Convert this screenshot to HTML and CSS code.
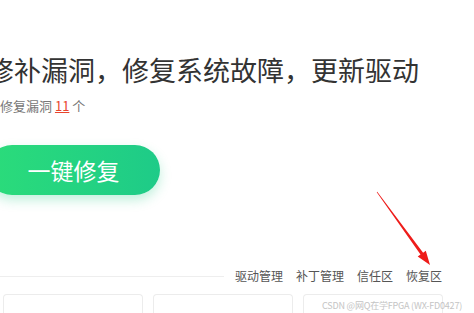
FILE: index.html
```html
<!DOCTYPE html>
<html lang="zh-CN">
<head>
<meta charset="utf-8">
<link rel="stylesheet" href="styles.css">
</head>
<body>
<div class="page">
  <h1 class="title">修补漏洞，修复系统故障，更新驱动</h1>
  <p class="sub">可修复漏洞 <span class="num">11</span> 个</p>
  <button class="fix">一键修复</button>
  <div class="navrow">
    <div class="rule"></div>
    <nav class="nav">
      <a>驱动管理</a>
      <a>补丁管理</a>
      <a>信任区</a>
      <a>恢复区</a>
    </nav>
  </div>
  <div class="cards">
    <div class="card"></div>
    <div class="card"></div>
    <div class="card"></div>
  </div>
</div>
<svg class="arrow" width="66" height="82" viewBox="0 0 66 82">
  <polygon points="7.24,3.82 53.1,64.66 55.8,62.7 60,77 47.7,68.5 50.5,66.5 6.76,4.18" fill="#ee1c1a"/>
</svg>
<div class="mark">CSDN @网Q在学FPGA (WX-FD0427)</div>
</body>
</html>
```
FILE: styles.css
```css
html, body {
  margin: 0;
  padding: 0;
  background: #fff;
  overflow: hidden;
}
body {
  width: 474px;
  height: 313px;
  position: relative;
  font-family: "Noto Sans CJK SC", "Noto Sans", sans-serif;
}
.page {
  margin-left: -13px;
  width: 456px;
  padding-top: 52px;
}
.title {
  margin: 0;
  font-size: 27px;
  line-height: 36px;
  font-weight: 400;
  color: #333;
  white-space: nowrap;
}
.sub {
  margin: 9px 0 0;
  font-size: 13px;
  line-height: 18px;
  color: #777;
}
.num {
  color: #e8452e;
  text-decoration: underline;
}
.fix {
  display: block;
  margin-top: 30px;
  width: 173px;
  height: 50px;
  border: 0;
  border-radius: 25px;
  background: linear-gradient(90deg, #2bdc7a, #1ecb88);
  box-shadow: 0 5px 12px rgba(30, 200, 130, 0.28);
  color: #fff;
  font-family: inherit;
  font-size: 23px;
  line-height: 50px;
  padding: 0;
}
.navrow {
  margin-top: 72px;
  display: flex;
  align-items: center;
  gap: 11px;
  padding-right: 1px;
}
.rule {
  flex: 1;
  height: 1px;
  background: #eeeeee;
}
.nav {
  display: flex;
  gap: 13px;
  font-size: 12px;
  line-height: 18px;
  color: #555;
}
.cards {
  margin-top: 9px;
  padding-left: 16px;
  display: flex;
  gap: 10px;
}
.card {
  width: 140px;
  height: 19px;
  border: 1px solid #ececec;
  border-bottom: 0;
  border-radius: 4px 4px 0 0;
  box-sizing: border-box;
}
.arrow {
  position: absolute;
  left: 370px;
  top: 188px;
}
.mark {
  position: absolute;
  left: 322px;
  top: 299px;
  font-size: 9px;
  line-height: 13px;
  letter-spacing: -0.2px;
  color: #c4c4c4;
  white-space: nowrap;
}
```
